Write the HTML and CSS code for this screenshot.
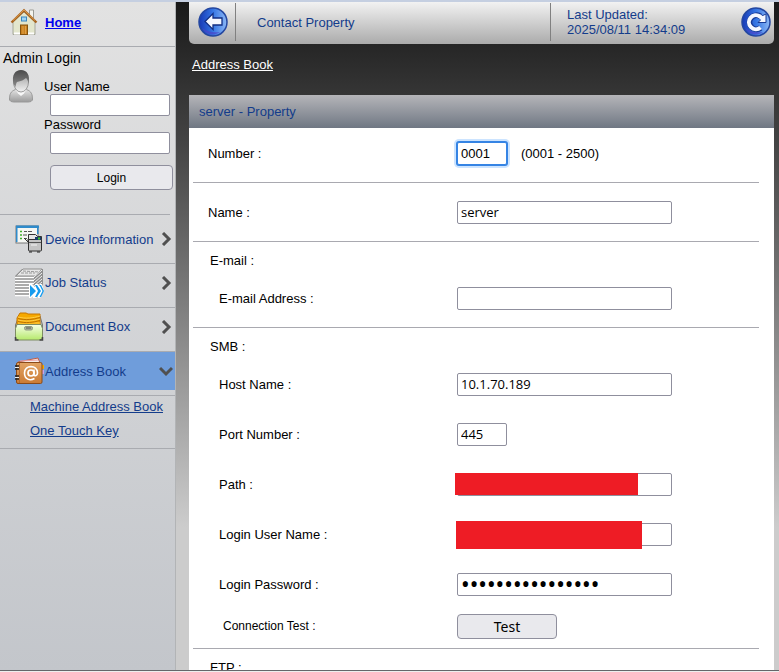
FILE: index.html
```html
<!DOCTYPE html>
<html lang="en">
<head>
<meta charset="utf-8">
<title>Contact Property</title>
<link rel="stylesheet" href="styles.css">
</head>
<body>
<div class="app">
  <aside class="sidebar">
    <div class="home">
      <svg class="home-icon" viewBox="0 0 28 28" aria-hidden="true">
        <path d="M19.500 2h4v9h-4z" fill="#f4f4ee" stroke="#9a9a94"/>
        <path d="M3 14 14 4l11 10v12.500H3z" fill="#e3e6cd" stroke="#a5a79a"/>
        <path d="M4 25.500h20" stroke="#fff" stroke-width="2"/>
        <path d="M1.500 14.500 14 2.500l12.500 12" fill="none" stroke="#a8631c" stroke-width="2.400"/>
        <path d="M3 12.500 14 2l11 10.500" fill="none" stroke="#d99a50"/>
        <rect x="11.500" y="9" width="5" height="4" fill="#9fd4f5" stroke="#3a86c0"/>
        <rect x="10.500" y="17" width="7" height="9.500" fill="#c9811f" stroke="#84520f"/>
        <path d="M13 18v8M15.500 18v8" stroke="#dea049"/>
      </svg>
      <a href="#">Home</a>
    </div>

    <form class="login">
      <h2>Admin Login</h2>
      <div class="login-body">
        <svg class="user-icon" viewBox="0 0 26 34" aria-hidden="true">
          <defs>
            <linearGradient id="coat" x1="0" y1="0" x2="0" y2="1"><stop offset="0" stop-color="#e2e2e2"/><stop offset="1" stop-color="#9b9b9b"/></linearGradient>
            <linearGradient id="face" x1="0" y1="0" x2="0" y2="1"><stop offset="0" stop-color="#999"/><stop offset="1" stop-color="#f2f2f2"/></linearGradient>
            <linearGradient id="hair" x1="0" y1="0" x2="0" y2="1"><stop offset="0" stop-color="#4a4a4a"/><stop offset="1" stop-color="#8a8a8a"/></linearGradient>
          </defs>
          <path d="M1.500 31c0-6 1-8.500 6-10.500h11c5 2 6 4.500 6 10.500q-1 2-4 2h-15q-3 0-4-2z" fill="url(#coat)" stroke="#999"/>
          <path d="M7.500 20.500h11l-2.500 4-3 2.500-3-2.500z" fill="#f8f8f8"/>
          <ellipse cx="13" cy="13" rx="7.500" ry="10" fill="url(#face)" stroke="#999"/>
          <path d="M5.500 15C3.500 6 7 1 13 1s9.500 5 7.500 14c-.3-3-1-5-2.500-6-2 2-5 3-9 4-1 1-1 3-1.500 5z" fill="url(#hair)"/>
        </svg>
        <div class="login-fields">
          <label for="user">User Name</label>
          <input id="user" type="text">
          <label for="pass">Password</label>
          <input id="pass" type="password">
          <button type="button">Login</button>
        </div>
      </div>
    </form>

    <nav>
      <ul class="menu">
        <li><a href="#">
          <svg class="menu-icon" viewBox="0 0 30 30" aria-hidden="true">
            <rect x="2" y="2" width="22" height="17" fill="#f5f7f3" stroke="#777"/>
            <path d="M2 1.500h23V4H2zM2 2h1.500v16H2zM23 2h1.500v8H23z" fill="#2f8bcb"/>
            <path d="M6 7.500h2M6 11h2M6 14.500h2" stroke="#43b02c" stroke-width="1.500"/>
            <path d="M10 7.500h3m1 0h5M9 11h8M10 14.500h3" stroke="#555" stroke-dasharray="4 1"/>
            <path d="m10 14 4 4v-3" fill="none" stroke="#333"/>
            <rect x="14.500" y="12.500" width="13" height="14.500" rx="1" fill="#c4c4c4" stroke="#303030"/>
            <path d="M14.500 10.500h7l2 2h4v3h-13z" fill="#e6e6e6" stroke="#333"/>
            <path d="M21 13h6v3h-6z" fill="#183d6b"/><path d="M24 13.500h2v2h-2z" fill="#47c92c"/>
            <path d="M15 18.500h12" stroke="#555"/><path d="M17 21h6" stroke="#f6f6f6"/>
            <path d="M15 28h3m5 0h3" stroke="#222"/>
          </svg>
          <span>Device Information</span>
          <svg class="chevron" viewBox="0 0 14 14" aria-hidden="true"><path d="m4 1 6 6-6 6"/></svg>
        </a></li>
        <li><a href="#">
          <svg class="menu-icon" viewBox="0 0 30 30" aria-hidden="true">
            <path d="M8 1h21v16l-8 11H1V8z" fill="#8f8f8f"/>
            <path d="M9 1h19l-7 7H2z" fill="#e6e6e6" stroke="#909090"/>
            <path d="m9 3 16 1M7 5h14" stroke="#999" stroke-dasharray="3 1"/>
            <path d="M1 9.500h19M1 12.500h19M1 15.500h19M1 18.500h19M1 21.500h19M1 24.500h19M1 27.500h18" stroke="#fff" stroke-width="1.700"/>
            <path d="m20 9 8-7M20 12l8-7M20 15l8-7M20 18l8-7M20 21l8-7" stroke="#f1f1f1"/>
            <path d="M15 16h3l3 3v-3h3l2 2v-2h2l2 7-4 7h-2v-2l-2 2h-3v-2l-2 2h-2z" fill="#fff"/>
            <path d="m16 17 6 6-6 6zM21 17h2l4 6-4 6h-2l3-6zM25.500 17h1.500l3 6-3 6h-1.500l3-6z" fill="#159bee"/>
          </svg>
          <span>Job Status</span>
          <svg class="chevron" viewBox="0 0 14 14" aria-hidden="true"><path d="m4 1 6 6-6 6"/></svg>
        </a></li>
        <li><a href="#">
          <svg class="menu-icon" viewBox="0 0 30 30" aria-hidden="true">
            <defs><linearGradient id="box" x1="0" y1="0" x2="0" y2="1"><stop offset="0" stop-color="#f7ffe8"/><stop offset="1" stop-color="#b5e96b"/></linearGradient></defs>
            <path d="M1.500 13 5 4h21l2.500 9v12h-27z" fill="#b9bdae" stroke="#777"/>
            <path d="M6 1h6l2 1h12v11H3V6z" fill="#f6a900" stroke="#c77700"/>
            <path d="M4 5c8 2 15 1 22-1M4 8c8 2 15 1 22-1M4 11h22" fill="none" stroke="#ffce4b"/>
            <path d="M4 6.500c8 2 15 1 22-1M4 9.500c8 2 15 1 22-1" fill="none" stroke="#bf7300"/>
            <path d="M3 12.500h24l1.500 4V25q0 3-3 3H4.500q-3 0-3-3v-8.500z" fill="url(#box)" stroke="#7d8c63"/>
            <path d="M1.500 25v3h3M28.500 25v3h-3" fill="none" stroke="#444" stroke-width="1.500"/>
            <rect x="10.500" y="14.500" width="8" height="3.500" rx="1.500" fill="#aeb99e" stroke="#8f9a80"/><path d="M12 16h5" stroke="#555"/>
          </svg>
          <span>Document Box</span>
          <svg class="chevron" viewBox="0 0 14 14" aria-hidden="true"><path d="m4 1 6 6-6 6"/></svg>
        </a></li>
        <li class="current"><a href="#">
          <svg class="menu-icon" viewBox="0 0 30 30" aria-hidden="true">
            <defs><linearGradient id="cover" x1="0" y1="0" x2="0" y2="1"><stop offset="0" stop-color="#e2a465"/><stop offset="1" stop-color="#cb7b34"/></linearGradient></defs>
            <path d="M4 6 24 2l2 5v18H4z" fill="#f7eeee" stroke="#c15d45"/>
            <path d="m6 5 18-1" stroke="#ee9f9f"/>
            <path d="M26 9h4v4h-4z" fill="#f6a800"/><path d="M26 14h4v4h-4z" fill="#cba1e4"/>
            <rect x="2.500" y="6.500" width="25.500" height="21" rx="1.500" fill="url(#cover)" stroke="#8b4b19"/>
            <path d="M5.500 7v20" stroke="#b16c30"/>
            <path d="M1 10h4M1 13h4M1 20h4M1 23h4" stroke="#222" stroke-width="1.500"/><path d="M1 11.500h4M1 21.500h4" stroke="#eee"/>
            <circle cx="17" cy="17" r="3" fill="none" stroke="#fff" stroke-width="1.700"/>
            <path d="M20 13.500v5c0 2 3.500 1.500 3.500-1.500 0-8.500-13-8.500-13 0 0 6.500 5.500 8 10 5.500" fill="none" stroke="#fff" stroke-width="1.600"/>
          </svg>
          <span>Address Book</span>
          <svg class="chevron" viewBox="0 0 14 14" aria-hidden="true"><path d="m1 4 6 6 6-6"/></svg>
        </a></li>
      </ul>
      <ul class="submenu">
        <li><a href="#">Machine Address Book</a></li>
        <li><a href="#">One Touch Key</a></li>
      </ul>
    </nav>
  </aside>

  <main class="main">
    <header class="topbar">
      <button class="round" type="button" aria-label="Back">
        <svg viewBox="0 0 30 30" aria-hidden="true">
          <defs><linearGradient id="ball" x1="0" y1="0" x2="1" y2="0"><stop offset="0" stop-color="#1739b5"/><stop offset=".5" stop-color="#3576e4"/><stop offset="1" stop-color="#8db8f5"/></linearGradient></defs>
          <circle cx="15" cy="15" r="14" fill="url(#ball)" stroke="#2447a0" stroke-width="1.500"/>
          <path d="M4 21a12 12 0 0 0 18 4c-7 1-12 0-18-4z" fill="#4b44c6" opacity=".7"/>
          <path d="M7 14.500 15 6.500V11h9v7h-9v4.500z" fill="#f5f8ff" stroke="#102d83" stroke-width="1.300"/>
        </svg>
      </button>
      <h1>Contact Property</h1>
      <div class="updated">
        <p>Last Updated:<br>2025/08/11 14:34:09</p>
        <button class="round" type="button" aria-label="Refresh">
          <svg viewBox="0 0 30 30" aria-hidden="true">
            <circle cx="15" cy="15" r="14" fill="url(#ball)" stroke="#2447a0" stroke-width="1.500"/>
            <path d="M4 21a12 12 0 0 0 18 4c-7 1-12 0-18-4z" fill="#4b44c6" opacity=".7"/>
            <path d="M19.500 21a7 7 0 1 1 0-11.500" fill="none" stroke="#173a96" stroke-width="5.800"/>
            <path d="M25 7v8.500h-8l2.500-2.500-1-3z" fill="#f5f8ff" stroke="#173a96"/>
            <path d="M19.500 20.500a7 7 0 1 1-.5-11l3 2.500" fill="none" stroke="#f5f8ff" stroke-width="4"/>
          </svg>
        </button>
      </div>
    </header>

    <p class="breadcrumb"><a href="#">Address Book</a></p>

    <section class="panel">
      <h2>server - Property</h2>
      <form class="form">
        <div class="group group-first">
          <div class="row row-top"><label for="number">Number :</label><input class="short focused" id="number" value="0001"><span class="hint">(0001 - 2500)</span></div>
        </div>
        <div class="group group-name">
          <div class="row row-top"><label for="name">Name :</label><input id="name" value="server"></div>
        </div>
        <fieldset class="group group-mail">
          <legend>E-mail :</legend>
          <div class="row"><label for="mail">E-mail Address :</label><input id="mail"></div>
        </fieldset>
        <fieldset class="group group-smb">
          <legend>SMB :</legend>
          <div class="row"><label for="host">Host Name :</label><input id="host" value="10.1.70.189"></div>
          <div class="row"><label for="port">Port Number :</label><input class="short" id="port" value="445"></div>
          <div class="row"><label for="path">Path :</label><span class="masked"><input id="path"><span class="mask mask-path"></span></span></div>
          <div class="row"><label for="smbuser">Login User Name :</label><span class="masked"><input id="smbuser"><span class="mask mask-user"></span></span></div>
          <div class="row"><label for="smbpass">Login Password :</label><input class="secret" id="smbpass" type="password" value="aaaaaaaaaaaaaaaa"></div>
          <div class="row row-test"><label for="test">Connection Test :</label><button id="test" type="button">Test</button></div>
        </fieldset>
        <fieldset class="group">
          <legend>FTP :</legend>
        </fieldset>
      </form>
    </section>
  </main>
</div>
</body>
</html>
```
FILE: styles.css
```css
* { box-sizing: border-box; }

body {
  margin: 0;
  font: 13px/15px "Liberation Sans", Arial, sans-serif;
  color: #000;
  background: #eee;
}

h1, h2, p, ul, fieldset { margin: 0; padding: 0; border: 0; font: inherit; }
ul { list-style: none; }

.app {
  display: flex;
  height: calc(100vh - 1px);
  border-top: 2px solid #c5cfe1;
  border-bottom: 1px solid #66666a;
  overflow: hidden;
}

/* Form controls */
input {
  width: 215px;
  height: 23px;
  padding: 0 3px;
  border: 1px solid #8f8f9d;
  border-radius: 2px;
  background: #fff;
  color: #000;
  font: 13px "Open Sans", "Noto Sans", sans-serif;
}

button {
  height: 25px;
  padding: 0;
  border: 1px solid #8f8f9d;
  border-radius: 4px;
  background: #e9e9ed;
  color: #000;
}

/* Sidebar */
.sidebar {
  flex: none;
  width: 176px;
  border-right: 1px solid #b2b4b6;
  background: linear-gradient(#e2e2e2, #c3c6cb);
}

.home {
  display: flex;
  align-items: center;
  gap: 7px;
  height: 45px;
  padding: 0 0 4px 10px;
  border-bottom: 1px solid #a9abb0;
}
.home a { color: #00e; font-weight: bold; }
.home-icon { width: 28px; height: 28px; }

.login {
  margin-right: 5px;
  border-bottom: 1px solid #a9abb0;
  padding-bottom: 24px;
}
.login h2 { padding: 3px 3px 0; font-size: 14px; line-height: 16px; }
.login-body { display: flex; gap: 10px; padding-left: 8px; }
.user-icon { flex: none; width: 26px; height: 34px; margin-top: 3px; }
.login-fields { flex: 1; padding-top: 12px; }
.login-fields label { display: block; height: 16px; line-height: 17px; }
.login-fields input { display: block; width: 120px; height: 22px; margin-left: 6px; }
.login-fields button {
  display: block;
  width: 123px;
  margin: 11px 0 0 6px;
  font: 12px "Liberation Sans", Arial, sans-serif;
}

.menu li { border-bottom: 1px solid #a9abb0; }
.menu a {
  display: flex;
  align-items: center;
  height: 43px;
  padding: 0 2px 6px 14px;
  color: #133c8b;
  text-decoration: none;
}
.menu li:first-child a { height: 48px; padding-bottom: 0; }
.menu span { flex: 1; white-space: nowrap; }
.menu-icon { flex: none; width: 30px; height: 30px; margin-right: 1px; }
.chevron { flex: none; width: 14px; height: 14px; fill: none; stroke: #505050; stroke-width: 3; }
.menu .current { border: 0; }
.menu .current a { height: 38px; padding-bottom: 0; background: #6f9ddb; }

.submenu {
  margin-top: 5px;
  padding: 0 0 4px 30px;
  border: solid #a9abb0;
  border-width: 1px 0;
}
.submenu li { height: 24px; line-height: 22px; white-space: nowrap; }
.submenu a { color: #133c8b; }

/* Main area */
.main {
  flex: 1;
  display: flex;
  flex-direction: column;
  min-width: 0;
  padding: 0 5px 0 13px;
  overflow: hidden;
  background: linear-gradient(#191919 0, #444 140px, #848484 320px, #ccc 525px);
}

.topbar {
  flex: none;
  display: flex;
  align-items: stretch;
  height: 42px;
  padding: 1px 0 3px;
  border-radius: 0 0 5px 5px;
  background: linear-gradient(#f2f2f2, #ababab);
  color: #133c8b;
}
.topbar h1 {
  flex: 1;
  padding: 12px 21px 0;
  border-left: 1px solid #808080;
}
.round { width: 46px; height: 38px; padding: 0 0 0 9px; border: 0; background: none; text-align: left; }
.round svg { display: block; width: 30px; height: 30px; }
.updated {
  display: flex;
  justify-content: space-between;
  align-items: center;
  width: 224px;
  border-left: 1px solid #808080;
}
.updated p { padding-left: 16px; }
.updated .round { width: 33px; padding: 0; }

.breadcrumb { flex: none; height: 51px; padding: 13px 3px 0; }
.breadcrumb a { color: #fff; }

.panel { flex: 1 0 auto; background: #fff; }
.panel h2 {
  height: 33px;
  padding: 9px 10px;
  background: linear-gradient(#b5b5b9, #6f7783);
  color: #133c8b;
}

.form { padding: 0 15px 0 4px; }
.group { border-bottom: 1px solid #a9a9b0; }
.group-first { padding: 7px 0 11px; }
.group-name { padding: 11px 0; }
.group-mail { padding-bottom: 11px; }
.group-smb { padding-bottom: 4px; }
.group legend { display: block; width: 100%; height: 38px; padding: 11px 17px; }

.row { display: flex; align-items: center; height: 36px; }
.row label { flex: none; width: 264px; padding-left: 26px; }
.row-top label { padding-left: 15px; }
.row + .row { margin-top: 14px; }
.row + .row-test { margin-top: 6px; }
.row-test label { padding-left: 30px; font-size: 12px; }
.row button { width: 100px; font: 14px "Noto Sans", sans-serif; }

.short { width: 50px; }
.secret { font: 23px "Noto Sans", sans-serif; }
.focused {
  border-color: #3584e4;
  outline: 0;
  box-shadow: 0 0 0 1px #3584e4, 0 0 0 3px #cce4ff;
  font-family: "Liberation Sans", Arial, sans-serif;
}
.hint { margin-left: 14px; }

/* Redaction bars over private values */
.masked { position: relative; display: flex; }
.mask { position: absolute; background: #ee1c25; }
.mask-path { inset: 0 34px 1px -2px; }
.mask-user { inset: -2px 30px -3px -1px; }
```
